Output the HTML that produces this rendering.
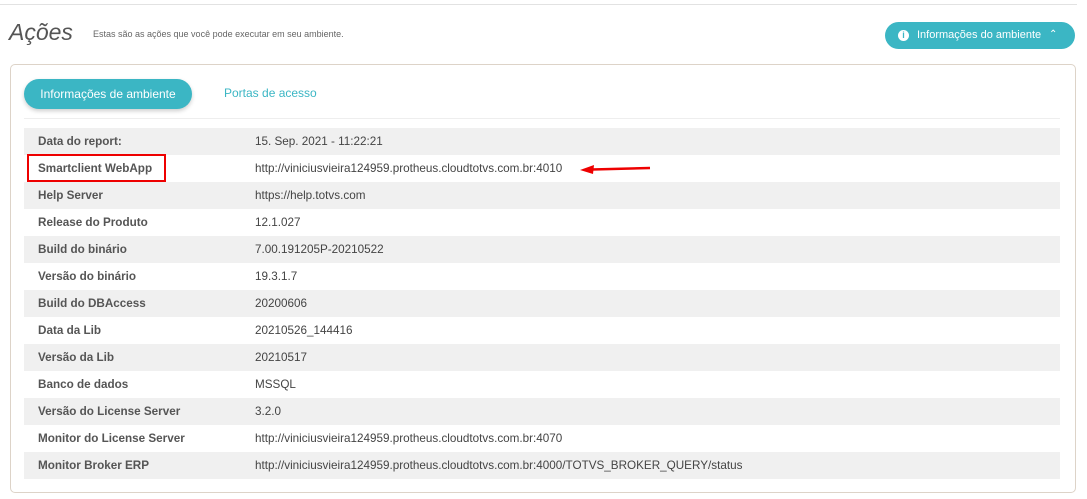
<!DOCTYPE html>
<html><head><meta charset="utf-8"><style>
body{margin:0;width:1087px;height:499px;background:#fff;font-family:"Liberation Sans",sans-serif;position:relative;overflow:hidden}
.topline{position:absolute;left:0;top:4px;width:1077px;height:1px;background:#e2e2e2}
.title{position:absolute;left:9px;top:19px;font-size:23px;font-style:italic;font-weight:300;color:#555}
.sub{position:absolute;left:93px;top:29px;font-size:9px;color:#666}
.btn{position:absolute;left:885px;top:22px;width:190px;height:27px;border-radius:14px;background:#3bb6c4;color:#fff;font-size:11px;line-height:27px}
.btn .i{position:absolute;left:13px;top:8px;width:11px;height:11px;border-radius:50%;background:#fff;color:#3bb6c4;font-size:9px;line-height:11px;text-align:center;font-weight:bold}
.card{position:absolute;left:10px;top:64px;width:1064px;height:427px;border:1px solid #ddd3c8;border-radius:5px}
.tab{position:absolute;left:24px;top:79px;width:168px;height:30px;border-radius:15px;background:#3bb6c4;color:#fff;font-size:12px;line-height:30px;text-align:center;box-shadow:0 2px 4px rgba(0,0,0,.2)}
.tab2{position:absolute;left:224px;top:86px;font-size:12px;color:#3bb6c4}
.sep{position:absolute;left:24px;top:118px;width:1036px;height:1px;background:#eee}
.rows{position:absolute;left:24px;top:128px;width:1036px}
.r{height:27px;line-height:27px;font-size:11.7px;position:relative}
.r:nth-child(odd){background:#f0f0f0}
.l{position:absolute;left:14px;font-weight:bold;color:#555}
.v{position:absolute;left:231px;color:#444}
.box{position:absolute;left:27px;top:154px;width:135px;height:24px;border:2px solid #e00}
</style></head><body>
<div class="topline"></div>
<div class="title">Ações</div>
<div class="sub">Estas são as ações que você pode executar em seu ambiente.</div>
<div class="btn"><span class="i">i</span><span style="position:absolute;left:32px">Informações do ambiente</span><span style="position:absolute;left:164px;top:-1px;font-size:10px">&#8963;</span></div>
<div class="card"></div>
<div class="tab">Informações de ambiente</div>
<div class="tab2">Portas de acesso</div>
<div class="sep"></div>
<div class="rows">
<div class="r"><span class="l">Data do report:</span><span class="v">15. Sep. 2021 - 11:22:21</span></div>
<div class="r"><span class="l">Smartclient WebApp</span><span class="v">http://viniciusvieira124959.protheus.cloudtotvs.com.br:4010</span></div>
<div class="r"><span class="l">Help Server</span><span class="v">https://help.totvs.com</span></div>
<div class="r"><span class="l">Release do Produto</span><span class="v">12.1.027</span></div>
<div class="r"><span class="l">Build do binário</span><span class="v">7.00.191205P-20210522</span></div>
<div class="r"><span class="l">Versão do binário</span><span class="v">19.3.1.7</span></div>
<div class="r"><span class="l">Build do DBAccess</span><span class="v">20200606</span></div>
<div class="r"><span class="l">Data da Lib</span><span class="v">20210526_144416</span></div>
<div class="r"><span class="l">Versão da Lib</span><span class="v">20210517</span></div>
<div class="r"><span class="l">Banco de dados</span><span class="v">MSSQL</span></div>
<div class="r"><span class="l">Versão do License Server</span><span class="v">3.2.0</span></div>
<div class="r"><span class="l">Monitor do License Server</span><span class="v">http://viniciusvieira124959.protheus.cloudtotvs.com.br:4070</span></div>
<div class="r"><span class="l">Monitor Broker ERP</span><span class="v">http://viniciusvieira124959.protheus.cloudtotvs.com.br:4000/TOTVS_BROKER_QUERY/status</span></div>
</div>
<div class="box"></div>
<svg style="position:absolute;left:578px;top:162px" width="75" height="14"><path d="M72 6 L14 7.5" stroke="#e00" stroke-width="2.5" fill="none"/><path d="M2 8 L16 3 L15 12 Z" fill="#e00"/></svg>
</body></html>
